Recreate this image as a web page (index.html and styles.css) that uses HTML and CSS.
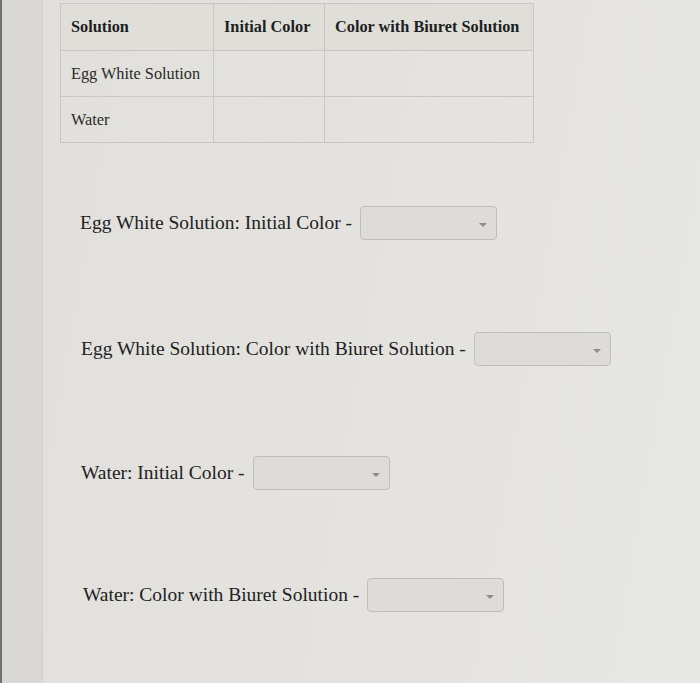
FILE: index.html
```html
<!DOCTYPE html>
<html lang="en">

<head>
    <meta charset="UTF-8" />
    <meta name="viewport" content="width=device-width, initial-scale=1.0" />
    <title>Biuret Test</title>
    <link rel="stylesheet" href="styles.css">
</head>

<body>
    <div class="edge"></div>
    <div class="strip"></div>
    <div class="page">
        <table class="results">
            <thead>
                <tr>
                    <th class="col-solution">Solution</th>
                    <th class="col-initial">Initial Color</th>
                    <th class="col-biuret">Color with Biuret Solution</th>
                </tr>
            </thead>
            <tbody>
                <tr>
                    <td>Egg White Solution</td>
                    <td></td>
                    <td></td>
                </tr>
                <tr>
                    <td>Water</td>
                    <td></td>
                    <td></td>
                </tr>
            </tbody>
        </table>

        <div class="question q1">
            <span class="label">Egg White Solution: Initial Color -</span>
            <span class="dropdown"><select><option></option></select><span class="arrow"></span></span>
        </div>
        <div class="question q2">
            <span class="label">Egg White Solution: Color with Biuret Solution -</span>
            <span class="dropdown"><select><option></option></select><span class="arrow"></span></span>
        </div>
        <div class="question q3">
            <span class="label">Water: Initial Color -</span>
            <span class="dropdown"><select><option></option></select><span class="arrow"></span></span>
        </div>
        <div class="question q4">
            <span class="label">Water: Color with Biuret Solution -</span>
            <span class="dropdown"><select><option></option></select><span class="arrow"></span></span>
        </div>
    </div>
</body>

</html>
```

FILE: styles.css
```css
body {
    margin: 0;
    height: 683px;
    display: flex;
    background-color: #e3e2de;
    font-family: 'Liberation Serif', 'Times New Roman', serif;
    color: #222222;
    overflow: hidden;
}

.edge {
    width: 2px;
    background-color: #707070;
}

.strip {
    width: 40px;
    background-color: #d9d8d4;
    border-right: 1px solid #d2d1cd;
}

.page {
    flex: 1;
    padding-top: 3px;
    background: linear-gradient(100deg, #e1e0dc 0%, #e4e3df 60%, #e8e8e4 100%);
}

.results {
    margin-left: 17px;
    border-collapse: collapse;
    font-family: 'Liberation Serif', 'Times New Roman', serif;
    font-size: 16.3px;
}

.results th,
.results td {
    border: 1px solid #c9c7c3;
    text-align: left;
    padding: 0 10px;
}

.results th {
    height: 46px;
    font-weight: bold;
    color: #1e1e1e;
    background-color: #dfded9;
}

.results td {
    height: 45px;
    color: #2a2a2a;
}

.col-solution {
    width: 132px;
}

.col-initial {
    width: 90px;
}

.col-biuret {
    width: 188px;
}

.question {
    display: flex;
    align-items: center;
    height: 34px;
    font-size: 19.5px;
    margin-left: 37px;
}

.q1 {
    margin-top: 63px;
}

.q2 {
    margin-top: 92px;
    margin-left: 38px;
}

.q3 {
    margin-top: 90px;
    margin-left: 38px;
}

.q4 {
    margin-top: 88px;
    margin-left: 40px;
}

.label {
    margin-right: 8px;
}

.dropdown {
    position: relative;
    display: inline-block;
}

.dropdown select {
    appearance: none;
    -webkit-appearance: none;
    width: 137px;
    height: 34px;
    border: 1px solid #bfbebb;
    border-radius: 4px;
    background-color: #dddcd8;
    display: block;
}

.arrow {
    position: absolute;
    right: 10px;
    top: 17px;
    width: 0;
    height: 0;
    border-left: 4px solid transparent;
    border-right: 4px solid transparent;
    border-top: 4px solid #8e8d8a;
}
```
